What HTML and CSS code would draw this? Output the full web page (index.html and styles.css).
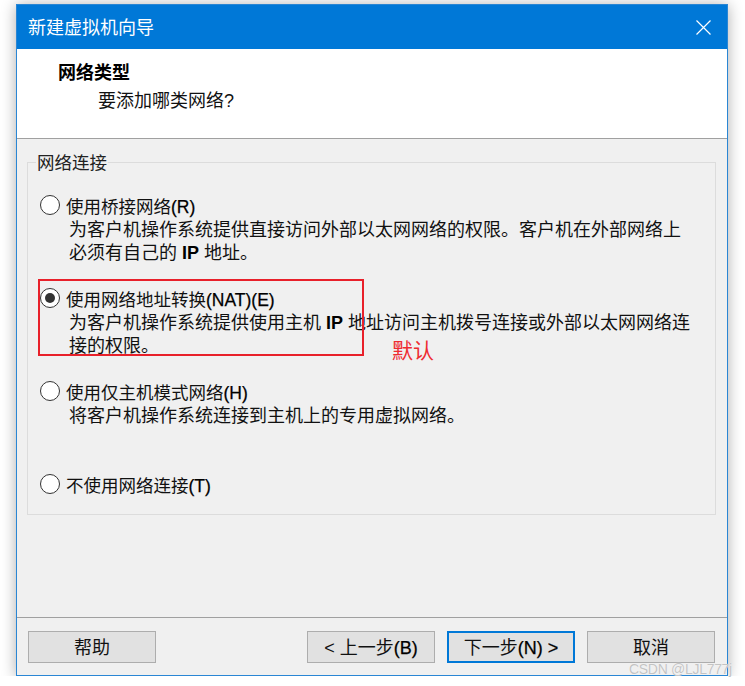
FILE: index.html
```html
<!DOCTYPE html>
<html lang="zh-CN">
<head>
<meta charset="utf-8">
<title>新建虚拟机向导</title>
<link rel="stylesheet" href="styles.css">
</head>
<body>
<div class="window">
  <div class="titlebar">
    <span class="title">新建虚拟机向导</span>
    <svg class="close" width="15" height="15" viewBox="0 0 15 15"><path d="M0.5 0.5 L14.5 14.5 M14.5 0.5 L0.5 14.5" stroke="#fff" stroke-width="1.2" fill="none"/></svg>
  </div>
  <div class="header">
    <div class="h-title">网络类型</div>
    <div class="h-sub">要添加哪类网络?</div>
  </div>
  <div class="body">
    <fieldset class="group">
      <legend>网络连接</legend>
      <div class="opts">
        <div class="option">
          <div class="row"><span class="radio"></span><span class="label">使用桥接网络<span class="lat">(R)</span></span></div>
          <div class="desc">为客户机操作系统提供直接访问外部以太网网络的权限。客户机在外部网络上<br>必须有自己的 <b class="lat">IP</b> 地址。</div>
        </div>
        <div class="option">
          <div class="row"><span class="radio on"><span class="dot"></span></span><span class="label">使用网络地址转换<span class="lat">(NAT)(E)</span></span></div>
          <div class="desc">为客户机操作系统提供使用主机 <b class="lat">IP</b> 地址访问主机拨号连接或外部以太网网络连<br>接的权限。</div>
        </div>
        <div class="option">
          <div class="row"><span class="radio"></span><span class="label">使用仅主机模式网络<span class="lat">(H)</span></span></div>
          <div class="desc">将客户机操作系统连接到主机上的专用虚拟网络。</div>
        </div>
        <div class="option">
          <div class="row"><span class="radio"></span><span class="label">不使用网络连接<span class="lat">(T)</span></span></div>
        </div>
      </div>
    </fieldset>
    <div class="footer">
      <div class="btn help">帮助</div>
      <div class="btn">&lt; 上一步<span class="lat">(B)</span></div>
      <div class="btn default">下一步<span class="lat">(N) &gt;</span></div>
      <div class="btn">取消</div>
    </div>
  </div>
  <div class="mark"></div>
  <div class="note">默认</div>
</div>
<div class="watermark">CSDN @LJL777j</div>
</body>
</html>
```

FILE: styles.css
```css
* { box-sizing: border-box; }
body {
  margin: 0;
  background: #fff;
  font-family: "Liberation Sans", "Noto Sans CJK SC", sans-serif;
  color: #111;
}
.window {
  position: relative;
  width: 712px;
  height: 672px;
  margin: 4px 0 0 16px;
  border: 1px solid #2a86d4;
  background: #f0f0f0;
  box-shadow: 0 1px 14px rgba(0, 0, 0, 0.32);
  display: flex;
  flex-direction: column;
}
.titlebar {
  height: 44px;
  background: #0078d7;
  color: #fff;
  display: flex;
  align-items: center;
  justify-content: space-between;
  padding: 0 16px 0 11px;
  font-size: 18px;
}
.title { line-height: 24px; padding-top: 2px; }
.close { display: block; }
.header {
  height: 90px;
  background: #fff;
  border-bottom: 1px solid #a0a0a0;
  padding: 12px 0 0 41px;
}
.h-title {
  font-size: 18px;
  font-weight: bold;
  line-height: 24px;
  color: #000;
}
.h-sub {
  font-size: 18px;
  line-height: 24px;
  margin: 4px 0 0 40px;
  color: #111;
}
.body {
  flex: 1;
  display: flex;
  flex-direction: column;
  padding-top: 12px;
}
.group {
  margin: 0 11px 0 10px;
  padding: 22px 0 20px 0;
  border: 1px solid #dcdcdc;
  min-width: 0;
}
.group legend {
  font-size: 17.5px;
  line-height: 20px;
  padding: 2px 1px 0;
  margin-left: 8px;
  color: #222;
}
.opts {
  display: flex;
  flex-direction: column;
  gap: 23px;
  padding-left: 12px;
}
.row {
  display: flex;
  align-items: center;
  height: 20px;
}
.radio {
  width: 20px;
  height: 20px;
  border-radius: 50%;
  border: 1px solid #333;
  background: #fff;
  display: flex;
  align-items: center;
  justify-content: center;
  flex: none;
}
.dot {
  width: 10px;
  height: 10px;
  border-radius: 50%;
  background: #333;
}
.label {
  margin-left: 6px;
  font-size: 17.5px;
  line-height: 20px;
  padding-top: 3px;
  white-space: nowrap;
}
.lat { color: #000; -webkit-text-stroke: 0.25px #000; }
b.lat { font-weight: bold; -webkit-text-stroke: 0; }
.desc {
  margin: 3px 0 0 29px;
  padding-top: 1px;
  font-size: 18px;
  line-height: 23px;
  min-height: 47px;
  white-space: nowrap;
}
.footer {
  margin-top: auto;
  border-top: 1px solid #a0a0a0;
  display: flex;
  gap: 12px;
  padding: 13px 12px 12px 11px;
}
.btn {
  width: 128px;
  height: 32px;
  border: 1px solid #adadad;
  background: #e1e1e1;
  font-size: 18px;
  line-height: 20px;
  padding-top: 2px;
  display: flex;
  align-items: center;
  justify-content: center;
  color: #111;
  white-space: nowrap;
}
.btn.help { margin-right: auto; }
.btn.default { border: 2px solid #0078d7; }
.mark {
  position: absolute;
  left: 21px;
  top: 274px;
  width: 326px;
  height: 77px;
  border: 2px solid #e8202a;
}
.note {
  position: absolute;
  left: 375px;
  top: 334px;
  font-size: 21px;
  line-height: 24px;
  color: #ee2b30;
}
.watermark {
  position: absolute;
  left: 629px;
  top: 661px;
  font-family: "Liberation Sans", Arial, sans-serif;
  font-size: 14px;
  line-height: 16px;
  color: #c4c4c4;
  text-shadow: 0 0 1px #fff;
  letter-spacing: -0.3px;
}
```
